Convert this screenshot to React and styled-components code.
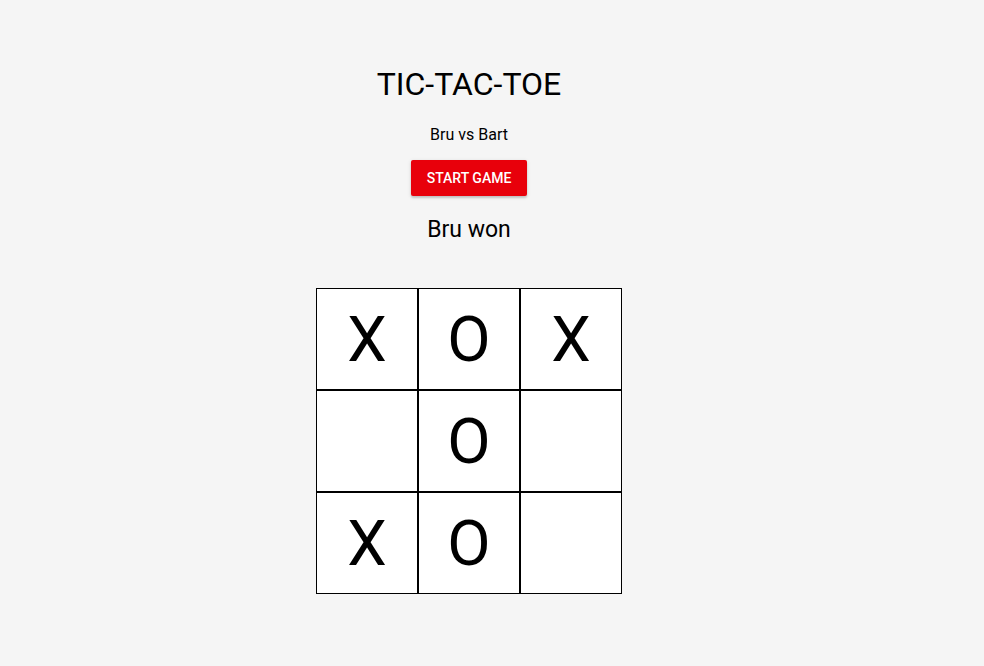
import React from "react";
import styled, { createGlobalStyle } from "styled-components";

const Global = createGlobalStyle`
  html, body { margin: 0; padding: 0; background: #f5f5f5; }
  body { font-family: Roboto, "Liberation Sans", Arial, sans-serif; color: #000; }
`;

const Page = styled.div`
  width: 938px;
  min-height: 666px;
  display: flex;
  flex-direction: column;
  align-items: center;
  padding-top: 65px;
  box-sizing: border-box;
`;

const Title = styled.h1`
  margin: 0;
  font-size: 32px;
  font-weight: 400;
  line-height: 38px;
`;

const Players = styled.p`
  margin: 22px 0 0;
  font-size: 16px;
  line-height: 20px;
`;

const StartButton = styled.button`
  margin-top: 15px;
  height: 36px;
  padding: 0 16px;
  border: none;
  border-radius: 2px;
  background: #e8000b;
  color: #fff;
  font-family: Roboto, "Liberation Sans", Arial, sans-serif;
  font-size: 14px;
  font-weight: 500;
  text-transform: uppercase;
  box-shadow: 0 2px 2px rgba(0,0,0,0.14), 0 1px 4px rgba(0,0,0,0.12);
  cursor: pointer;
`;

const Status = styled.div`
  margin-top: 20px;
  font-size: 23px;
  line-height: 28px;
`;

const Board = styled.div`
  margin-top: 44px;
  display: grid;
  grid-template-columns: repeat(3, 102px);
  grid-template-rows: repeat(3, 102px);
`;

const Cell = styled.div`
  box-sizing: border-box;
  border: 1px solid #000;
  background: #fff;
  display: flex;
  align-items: center;
  justify-content: center;
  font-size: 63px;
  line-height: 1;
`;

const board = ["X", "O", "X", "", "O", "", "X", "O", ""];

export default function App() {
  return (
    <>
      <Global />
      <Page>
        <Title>TIC-TAC-TOE</Title>
        <Players>Bru vs Bart</Players>
        <StartButton>Start Game</StartButton>
        <Status>Bru won</Status>
        <Board>
          {board.map((v, i) => (
            <Cell key={i}>{v}</Cell>
          ))}
        </Board>
      </Page>
    </>
  );
}
